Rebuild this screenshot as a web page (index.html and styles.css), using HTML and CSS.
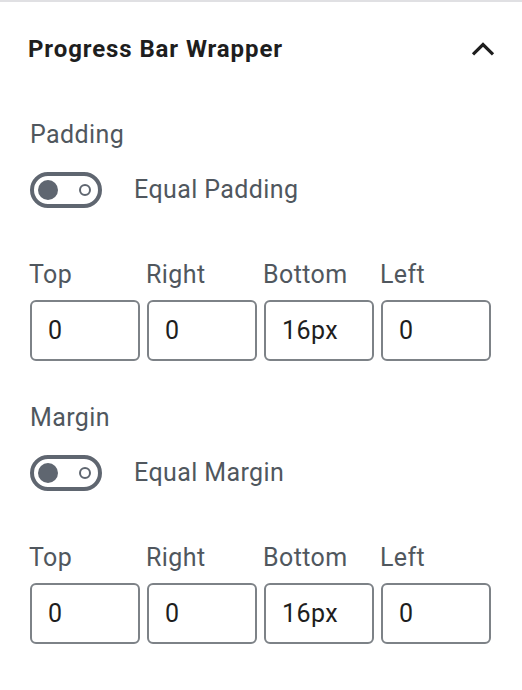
FILE: index.html
```html
<!DOCTYPE html>
<html>
<head>
<meta charset="utf-8">
<link rel="stylesheet" href="styles.css">
</head>
<body>
<div class="panel">
  <div class="header">
    <h2 class="title">Progress Bar Wrapper</h2>
    <svg class="chevron" width="24" height="14" viewBox="0 0 24 14"><polyline points="2,12.3 12,2.6 22,12.3" fill="none" stroke="#1e1e1e" stroke-width="3.2"/></svg>
  </div>

  <div class="section first">
    <div class="label">Padding</div>
    <div class="toggle-row">
      <span class="toggle"><span class="knob"></span><span class="ring"></span></span>
      <span class="toggle-text">Equal Padding</span>
    </div>
    <div class="grid">
      <div class="col"><div class="label">Top</div><div class="input">0</div></div>
      <div class="col"><div class="label">Right</div><div class="input">0</div></div>
      <div class="col"><div class="label">Bottom</div><div class="input">16px</div></div>
      <div class="col"><div class="label">Left</div><div class="input">0</div></div>
    </div>
  </div>

  <div class="section">
    <div class="label">Margin</div>
    <div class="toggle-row">
      <span class="toggle"><span class="knob"></span><span class="ring"></span></span>
      <span class="toggle-text">Equal Margin</span>
    </div>
    <div class="grid">
      <div class="col"><div class="label">Top</div><div class="input">0</div></div>
      <div class="col"><div class="label">Right</div><div class="input">0</div></div>
      <div class="col"><div class="label">Bottom</div><div class="input">16px</div></div>
      <div class="col"><div class="label">Left</div><div class="input">0</div></div>
    </div>
  </div>
</div>
</body>
</html>
```
FILE: styles.css
```css
html, body {
  margin: 0;
  padding: 0;
  background: #ffffff;
}
body {
  font-family: Roboto, "Liberation Sans", sans-serif;
  width: 522px;
  height: 690px;
  overflow: hidden;
}
.panel {
  border-top: 2px solid #e0e0e3;
}
.header {
  display: flex;
  align-items: center;
  justify-content: space-between;
  padding: 34px 27px 0 28px;
}
.title {
  margin: 0;
  font-size: 24px;
  line-height: 26px;
  font-weight: 700;
  letter-spacing: 0.9px;
  color: #1e1e1e;
}
.chevron {
  display: block;
}
.section {
  padding: 0 31px 0 30px;
  margin-top: 43px;
}
.section.first {
  margin-top: 59px;
}
.label {
  font-size: 25px;
  line-height: 28px;
  letter-spacing: 0.4px;
  color: #50575e;
}
.toggle-row {
  display: flex;
  align-items: center;
  margin-top: 23px;
  gap: 32px;
}
.toggle {
  box-sizing: border-box;
  width: 72px;
  height: 36px;
  border: 4px solid #5f6670;
  border-radius: 18px;
  display: flex;
  align-items: center;
  justify-content: space-between;
  padding: 0 7px 0 4px;
}
.knob {
  width: 20px;
  height: 20px;
  border-radius: 50%;
  background: #5f6670;
}
.ring {
  box-sizing: border-box;
  width: 12px;
  height: 12px;
  border-radius: 50%;
  border: 2.5px solid #5f6670;
}
.toggle-text {
  font-size: 25px;
  line-height: 28px;
  letter-spacing: 0.4px;
  color: #50575e;
}
.grid {
  display: grid;
  grid-template-columns: repeat(4, 1fr);
  column-gap: 7px;
  margin-top: 53px;
}
.col .label {
  margin-left: -1px;
}
.input {
  box-sizing: border-box;
  margin-top: 11px;
  height: 61px;
  border: 2px solid #7d8287;
  border-radius: 6px;
  padding-left: 16px;
  font-size: 25px;
  line-height: 57px;
  letter-spacing: 0.4px;
  color: #1e1e1e;
}
```
